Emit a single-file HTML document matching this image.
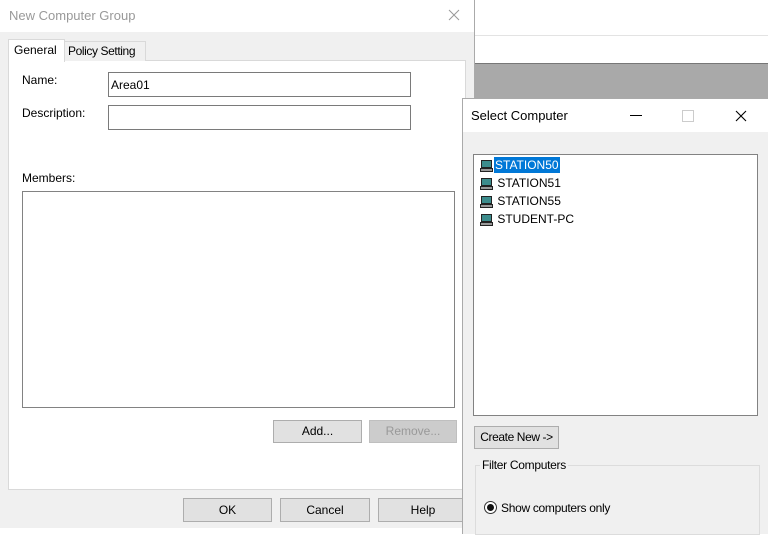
<!DOCTYPE html><html><head><style>
body{margin:0;width:768px;height:533px;position:relative;overflow:hidden;font-family:"Liberation Sans",sans-serif;font-size:12px;color:#000;background:#fff}
.a{position:absolute}
.btn{position:absolute;background:#e1e1e1;border:1px solid #adadad;text-align:center;box-sizing:border-box;font-size:12px}
.inp{position:absolute;background:#fff;border:1px solid #7a7a7a;box-sizing:border-box}
.row{height:18px;line-height:18px;white-space:nowrap}
.row svg{vertical-align:-3px;margin-right:1px}
</style></head><body>
<div class="a" style="left:475px;top:0;width:293px;height:64px;background:#fff"></div>
<div class="a" style="left:475px;top:35px;width:293px;height:1px;background:#e3e3e3"></div>
<div class="a" style="left:475px;top:63px;width:293px;height:1px;background:#777"></div>
<div class="a" style="left:475px;top:64px;width:293px;height:469px;background:#a9a9a9"></div>
<div class="a" style="left:0;top:528px;width:475px;height:5px;background:#fff"></div>
<div class="a" style="left:0;top:0;width:474px;height:528px;background:#f0f0f0;border-right:1px solid #aaa"></div>
<div class="a" style="left:0;top:0;width:474px;height:32px;background:#fff"></div>
<div class="a" style="left:9px;top:8px;font-size:13px;color:#999">New Computer Group</div>
<svg class="a" style="left:448px;top:9px" width="12" height="12"><path d="M1 1L11 11M11 1L1 11" stroke="#999" stroke-width="1"/></svg>
<div class="a" style="left:8px;top:60px;width:456px;height:428px;background:#fff;border:1px solid #d9d9d9"></div>
<div class="a" style="left:8px;top:39px;width:55px;height:22px;background:#fff;border:1px solid #d9d9d9;border-bottom:none"></div>
<div class="a" style="left:14px;top:43px">General</div>
<div class="a" style="left:64px;top:41px;width:80px;height:19px;background:#f0f0f0;border:1px solid #d9d9d9;border-bottom:none"></div>
<div class="a" style="left:68px;top:44px;letter-spacing:-0.4px">Policy Setting</div>
<div class="a" style="left:22px;top:73px">Name:</div>
<div class="inp" style="left:108px;top:72px;width:303px;height:25px"><span style="position:absolute;left:2px;top:5px">Area01</span></div>
<div class="a" style="left:22px;top:106px">Description:</div>
<div class="inp" style="left:108px;top:105px;width:303px;height:25px"></div>
<div class="a" style="left:22px;top:171px">Members:</div>
<div class="inp" style="left:22px;top:191px;width:433px;height:217px;border-color:#828282"></div>
<div class="btn" style="left:273px;top:420px;width:89px;height:23px;line-height:21px">Add...</div>
<div class="btn" style="left:369px;top:420px;width:88px;height:23px;line-height:21px;color:#999;background:#ccc;border-color:#bfbfbf">Remove...</div>
<div class="btn" style="left:183px;top:498px;width:89px;height:24px;line-height:22px">OK</div>
<div class="btn" style="left:280px;top:498px;width:90px;height:24px;line-height:22px">Cancel</div>
<div class="btn" style="left:378px;top:498px;width:90px;height:24px;line-height:22px">Help</div>
<div class="a" style="left:462px;top:98px;width:306px;height:435px;background:#f0f0f0;border-left:1px solid #aaa;border-top:1px solid #aaa"></div>
<div class="a" style="left:463px;top:99px;width:305px;height:33px;background:#fff"></div>
<div class="a" style="left:471px;top:108px;font-size:13px">Select Computer</div>
<div class="a" style="left:630px;top:115px;width:12px;height:1px;background:#000"></div>
<div class="a" style="left:682px;top:110px;width:10px;height:10px;border:1px solid #ccc"></div>
<svg class="a" style="left:735px;top:110px" width="12" height="12"><path d="M1 1L11 11M11 1L1 11" stroke="#000" stroke-width="1.1"/></svg>
<div class="inp" style="left:473px;top:154px;width:285px;height:262px;border-color:#828282"></div>
<div class="a" style="left:480px;top:156px">
<div class="row"><svg width="13" height="13"><rect x="1.5" y="1.5" width="10" height="7" fill="#3c8c8c" stroke="#222"/><rect x="0.5" y="9.5" width="12" height="3" fill="#999" stroke="#222"/></svg><span style="background:#0078d7;color:#fff;padding:1px 1px">STATION50</span></div>
<div class="row"><svg width="13" height="13"><rect x="1.5" y="1.5" width="10" height="7" fill="#3c8c8c" stroke="#222"/><rect x="0.5" y="9.5" width="12" height="3" fill="#999" stroke="#222"/></svg> STATION51</div>
<div class="row"><svg width="13" height="13"><rect x="1.5" y="1.5" width="10" height="7" fill="#3c8c8c" stroke="#222"/><rect x="0.5" y="9.5" width="12" height="3" fill="#999" stroke="#222"/></svg> STATION55</div>
<div class="row"><svg width="13" height="13"><rect x="1.5" y="1.5" width="10" height="7" fill="#3c8c8c" stroke="#222"/><rect x="0.5" y="9.5" width="12" height="3" fill="#999" stroke="#222"/></svg> STUDENT-PC</div>
</div>
<div class="btn" style="left:474px;top:426px;width:85px;height:23px;line-height:21px;letter-spacing:-0.4px">Create New -></div>
<div class="a" style="left:475px;top:465px;width:283px;height:68px;border:1px solid #dcdcdc"></div>
<div class="a" style="left:480px;top:458px;background:#f0f0f0;padding:0 2px;letter-spacing:-0.3px">Filter Computers</div>
<div class="a" style="left:484px;top:501px;width:11px;height:11px;border:1px solid #333;border-radius:50%;background:#fff"></div>
<div class="a" style="left:487px;top:504px;width:7px;height:7px;border-radius:50%;background:#111"></div>
<div class="a" style="left:501px;top:501px;letter-spacing:-0.3px">Show computers only</div>
</body></html>
